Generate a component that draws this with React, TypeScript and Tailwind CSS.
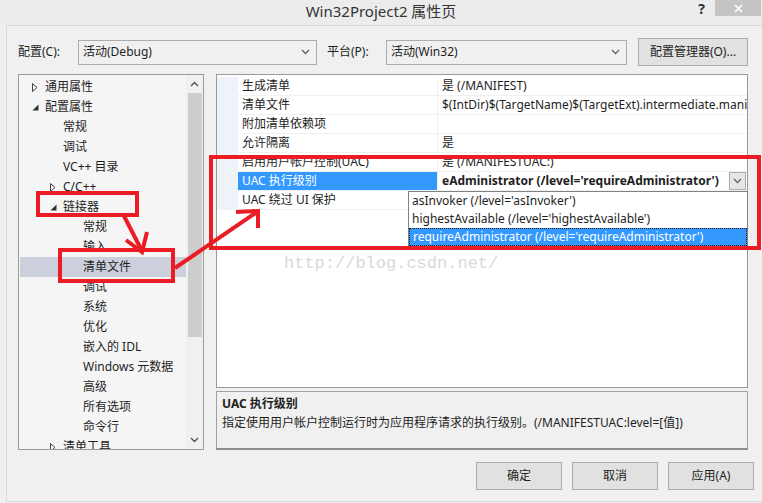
import React from "react";

type TreeItem = { t: string; lvl: 0 | 1 | 2; exp?: "open" | "closed"; sel?: boolean };

const tree: TreeItem[] = [
  { t: "通用属性", lvl: 0, exp: "closed" },
  { t: "配置属性", lvl: 0, exp: "open" },
  { t: "常规", lvl: 1 },
  { t: "调试", lvl: 1 },
  { t: "VC++ 目录", lvl: 1 },
  { t: "C/C++", lvl: 1, exp: "closed" },
  { t: "链接器", lvl: 1, exp: "open" },
  { t: "常规", lvl: 2 },
  { t: "输入", lvl: 2 },
  { t: "清单文件", lvl: 2, sel: true },
  { t: "调试", lvl: 2 },
  { t: "系统", lvl: 2 },
  { t: "优化", lvl: 2 },
  { t: "嵌入的 IDL", lvl: 2 },
  { t: "Windows 元数据", lvl: 2 },
  { t: "高级", lvl: 2 },
  { t: "所有选项", lvl: 2 },
  { t: "命令行", lvl: 2 },
  { t: "清单工具", lvl: 1, exp: "closed" },
];

const rows: { n: string; v: string; sel?: boolean }[] = [
  { n: "生成清单", v: "是 (/MANIFEST)" },
  { n: "清单文件", v: "$(IntDir)$(TargetName)$(TargetExt).intermediate.manifest" },
  { n: "附加清单依赖项", v: "" },
  { n: "允许隔离", v: "是" },
  { n: "启用用户帐户控制(UAC)", v: "是 (/MANIFESTUAC:)" },
  { n: "UAC 执行级别", v: "eAdministrator (/level='requireAdministrator')", sel: true },
  { n: "UAC 绕过 UI 保护", v: "" },
];

function Chevron({ color = "#606060" }: { color?: string }) {
  return (
    <svg width="9" height="6" viewBox="0 0 9 6">
      <path d="M1 1 L4.5 4.5 L8 1" fill="none" stroke={color} strokeWidth="1.3" />
    </svg>
  );
}

function Expander({ kind }: { kind?: "open" | "closed" }) {
  if (kind === "closed")
    return (
      <svg width="6" height="9" viewBox="0 0 6 9">
        <path d="M0.5 0.5 L5 4.5 L0.5 8.5 Z" fill="none" stroke="#404040" strokeWidth="1" />
      </svg>
    );
  if (kind === "open")
    return (
      <svg width="7" height="7" viewBox="0 0 7 7">
        <path d="M6.5 0.5 L6.5 6.5 L0.5 6.5 Z" fill="#303030" />
      </svg>
    );
  return null;
}

function Select({ text, w }: { text: string; w: string }) {
  return (
    <div
      className={`${w} h-[25px] border border-[#acacac] bg-[#f0f0f0] flex items-center pl-[4px] pr-[6px] text-[12px] text-[#1e1e1e]`}
    >
      <span className="flex-1">{text}</span>
      <Chevron />
    </div>
  );
}

function Btn({ text, w }: { text: string; w: string }) {
  return (
    <div
      className={`${w} h-[28px] border border-[#adadad] bg-[#e1e1e1] flex items-center justify-center text-[12px] text-[#1e1e1e]`}
    >
      {text}
    </div>
  );
}

export default function App() {
  return (
    <div className="relative w-[762px] h-[503px] overflow-hidden bg-[#f0f0f0] font-['Noto_Sans','Noto_Sans_CJK_SC',sans-serif] text-[#1e1e1e] flex flex-col">
      {/* Title bar */}
      <div className="h-[25px] flex items-start bg-[#ececec]">
        <div className="flex-1" />
        <div className="text-[15px] leading-[22px] text-[#333]">Win32Project2 属性页</div>
        <div className="flex-1 flex justify-end items-start">
          <div className="text-[14px] font-bold leading-[18px] text-[#333] mr-[10px]">?</div>
          <div className="w-[46px] h-[16px] bg-[#c4c4c4] flex items-center justify-center mr-[1px]">
            <svg width="9" height="9" viewBox="0 0 9 9">
              <path d="M1 1 L8 8 M8 1 L1 8" stroke="#ffffff" strokeWidth="1.6" />
            </svg>
          </div>
        </div>
      </div>

      {/* Content panel */}
      <div className="ml-[6px] h-[477px] border-l border-t border-b border-[#dadada] flex flex-col">
        {/* Top row */}
        <div className="mt-[12px] h-[28px] flex items-center pl-[11px]">
          <span className="text-[12px] w-[60px]">配置(C):</span>
          <Select text="活动(Debug)" w="w-[239px]" />
          <span className="text-[12px] ml-[10px] w-[59px]">平台(P):</span>
          <Select text="活动(Win32)" w="w-[241px]" />
          <div className="ml-[11px] w-[110px] h-[28px] border border-[#adadad] bg-[#e1e1e1] flex items-center justify-center text-[12px]">
            配置管理器(O)...
          </div>
        </div>

        {/* Main area */}
        <div className="mt-[8px] flex pl-[11px]">
          {/* Tree */}
          <div className="w-[186px] h-[376px] border border-[#9a9a9a] bg-[#f5f5f5] flex overflow-hidden">
            <div className="flex-1 pt-[2px] overflow-hidden">
              {tree.map((it, i) => (
                <div
                  key={i}
                  className={`h-[20px] flex items-center text-[12px] whitespace-nowrap ml-[1px] ${
                    it.sel ? "bg-[#ccd0dc]" : ""
                  } ${it.lvl === 0 ? "pl-[12px]" : it.lvl === 1 ? "pl-[30px]" : "pl-[50px]"}`}
                >
                  <span className="w-[13px] flex items-center">
                    <Expander kind={it.exp} />
                  </span>
                  <span>{it.t}</span>
                </div>
              ))}
            </div>
            <div className="w-[17px] bg-[#f0f0f0] flex flex-col items-center">
              <div className="h-[18px] flex items-center justify-center rotate-180">
                <Chevron color="#505050" />
              </div>
              <div className="w-[14px] h-[244px] bg-[#cdcdcd]" />
              <div className="flex-1" />
              <div className="h-[18px] flex items-center justify-center">
                <Chevron color="#505050" />
              </div>
            </div>
          </div>

          {/* Right column */}
          <div className="ml-[12px] w-[532px] flex flex-col">
            <div className="h-[314px] border border-[#9a9a9a] bg-white overflow-hidden pt-[2px]">
              {rows.map((r, i) => (
                <div key={i} className="h-[19px] flex text-[12px]">
                  <div className="w-[21px] bg-[#eef3fa]" />
                  <div
                    className={`w-[200px] pl-[4px] flex items-center border-r border-b border-[#f0f0f0] whitespace-nowrap ${
                      r.sel ? "bg-[#3399ff] text-white" : ""
                    }`}
                  >
                    {r.n}
                  </div>
                  <div className="flex-1 flex items-center border-b border-[#f0f0f0] overflow-hidden">
                    <span
                      className={`pl-[4px] whitespace-nowrap overflow-hidden flex-1 ${r.sel ? "font-bold" : ""}`}
                    >
                      {r.v}
                    </span>
                    {r.sel && (
                      <div className="w-[17px] h-[18px] border border-[#acacac] bg-[#e6e6e6] flex items-center justify-center mr-[1px]">
                        <Chevron />
                      </div>
                    )}
                  </div>
                </div>
              ))}
            </div>
            <div className="mt-[3px] h-[59px] border border-[#a0a0a0] border-b-2 border-b-[#8c8c8c] bg-[#f0f0f0] px-[5px] pt-[2px] text-[12px]">
              <div className="font-bold leading-[19px]">UAC 执行级别</div>
              <div className="leading-[19px]">指定使用用户帐户控制运行时为应用程序请求的执行级别。(/MANIFESTUAC:level=[值])</div>
            </div>
          </div>
        </div>

        {/* Buttons */}
        <div className="mt-[12px] flex justify-end gap-[10px] pr-[8px]">
          <Btn text="确定" w="w-[86px]" />
          <Btn text="取消" w="w-[86px]" />
          <Btn text="应用(A)" w="w-[86px]" />
        </div>
      </div>

      {/* Dropdown list popup */}
      <div className="absolute left-[408px] top-[191px] w-[340px] h-[58px] border border-[#828282] bg-white text-[12px]">
        <div className="h-[18px] flex items-center pl-[3px]">asInvoker (/level='asInvoker')</div>
        <div className="h-[18px] flex items-center pl-[3px]">highestAvailable (/level='highestAvailable')</div>
        <div className="h-[18px] flex items-center pl-[3px] bg-[#3399ff] text-white border border-dotted border-[#1a1a1a]">
          requireAdministrator (/level='requireAdministrator')
        </div>
      </div>

      {/* Watermark */}
      <div className="absolute left-[284px] top-[251px] text-[17px] text-[#d9d9d9] font-['Liberation_Mono',monospace] pointer-events-none">
        http://blog.csdn.net/
      </div>

      {/* Red annotations */}
      <svg className="absolute inset-0 pointer-events-none" width="762" height="503" viewBox="0 0 762 503">
        <g fill="none" stroke="#ec1c24" strokeWidth="4">
          <rect x="38" y="193" width="99" height="22" />
          <rect x="60" y="250" width="113" height="31" />
          <rect x="211" y="157" width="548" height="91" />
          <path d="M123 214 L142 251" />
          <path d="M126 240 L142 252 L147 232" />
          <path d="M175 268 L257 212" />
          <path d="M236 212 L258 211 L258 228" />
        </g>
      </svg>
    </div>
  );
}
